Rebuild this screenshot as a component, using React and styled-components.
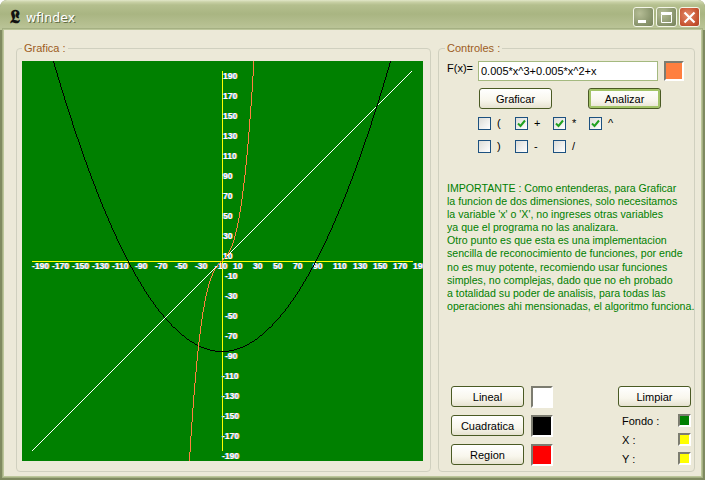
import React from 'react';
import styled, { createGlobalStyle } from 'styled-components';

const GlobalStyle = createGlobalStyle`
  html, body {
    margin: 0;
    padding: 0;
    background: #fff;
  }
  * { box-sizing: border-box; }
`;

const Window = styled.div`
  width: 705px;
  height: 480px;
  display: flex;
  flex-direction: column;
  font-family: "Liberation Sans", Arial, sans-serif;
  font-size: 11px;
  color: #000;
  background: #7f8a60;
  border-radius: 7px 7px 0 0;
  overflow: hidden;
`;

const TitleBar = styled.div`
  height: 30px;
  flex: none;
  display: flex;
  align-items: center;
  padding: 4px 5px 0 7px;
  background: linear-gradient(180deg, #e2e7c9 0px, #c9d1a6 2px, #b4bf8e 5px, #a9b582 14px, #b5bf90 24px, #bcc69a 30px);
`;

const AppIcon = styled.span`
  width: 15px;
  margin-right: 4px;
  font-family: "DejaVu Serif", "Liberation Serif", serif;
  font-size: 18px;
  font-weight: bold;
  color: #111;
  text-align: center;
  line-height: 16px;
`;

const TitleText = styled.span`
  flex: 1;
  font-family: "DejaVu Sans", Verdana, sans-serif;
  font-size: 12.5px;
  color: #fff;
  text-shadow: 1px 1px 0 #5f6b45;
`;

const CaptionButton = styled.button`
  width: 21px;
  height: 20px;
  padding: 0;
  margin-left: 2px;
  border: 1px solid #f4f6e8;
  border-radius: 3px;
  background: ${p => p.$close
    ? 'radial-gradient(circle at 40% 40%, #e58a6a, #c4512e 70%, #b04426)'
    : 'radial-gradient(circle at 30% 30%, #b5bd95, #8d9870 60%, #77825a)'};
  display: flex;
  align-items: center;
  justify-content: center;
`;

const Body = styled.div`
  flex: 1;
  margin: 0 4px 4px;
  padding: 12px 6px 4px 12px;
  background: #ece9d8;
  box-shadow: 0 0 0 1px #bcc69a, 0 0 0 2px #a5b083;
  display: flex;
  gap: 7px;
`;

const GroupBox = styled.fieldset`
  margin: 0;
  width: ${p => p.$width}px;
  border: 1px solid #d0d0bf;
  border-radius: 4px;
  min-width: 0;
`;

const GraphGroup = styled(GroupBox)`
  padding: 6px 0 0 5px;
`;

const ControlGroup = styled(GroupBox)`
  padding: 6px 3px 6px 8px;
  display: flex;
  flex-direction: column;
  justify-content: space-between;
`;

const GroupTitle = styled.legend`
  padding: 0 2px;
  margin-left: ${p => p.$indent}px;
  font-size: 11px;
  line-height: 13px;
  color: #9c5c1d;
`;

const Plot = styled.svg`
  display: block;
  width: 401px;
  height: 400px;
  background: #008000;
`;

const AxisLabel = styled.text`
  font-family: "Liberation Sans", Arial, sans-serif;
  font-size: 8.5px;
  font-weight: bold;
  fill: #fff;
  text-shadow: -0.6px 0 0 #3aa0ff, 0.6px 0 0 #ff9a40;
`;

const FormulaRow = styled.div`
  display: flex;
  align-items: flex-start;
`;

const FormulaLabel = styled.label`
  width: 31px;
  margin-top: 1px;
  line-height: 13px;
`;

const FormulaInput = styled.input`
  width: 180px;
  height: 20px;
  padding: 0 2px;
  border: 1px solid #a4b97f;
  background: #fff;
  font-family: "Liberation Sans", Arial, sans-serif;
  font-size: 11px;
  color: #000;
  outline: none;
`;

const Swatch = styled.span`
  display: block;
  flex: none;
  width: ${p => p.$size}px;
  height: ${p => p.$size}px;
  background: ${p => p.$color};
  border: 2px solid;
  border-color: #7c7c70 #fff #fff #7c7c70;
`;

const FormulaSwatch = styled(Swatch)`
  margin-left: 6px;
`;

const ActionRow = styled.div`
  display: flex;
  gap: 36px;
  margin: 7px 0 0 32px;
`;

const PushButton = styled.button`
  width: 73px;
  height: 21px;
  padding: 0;
  border: 1px solid #4a5a24;
  border-radius: 3px;
  background: linear-gradient(180deg, #fff 0%, #f8f6ec 60%, #e6e2d0 100%);
  box-shadow: ${p => p.$default ? 'inset 0 0 0 2px #a3c468' : 'none'};
  font-family: "Liberation Sans", Arial, sans-serif;
  font-size: 11px;
  color: #000;
`;

const CheckGrid = styled.div`
  display: grid;
  grid-template-columns: 37px 38px 36px 36px;
  row-gap: 9px;
  margin: 7px 0 0 31px;
`;

const CheckItem = styled.label`
  display: flex;
  align-items: center;
  gap: 6px;
  height: 14px;
  font-size: 11px;
`;

const CheckBox = styled.span`
  width: 13px;
  height: 13px;
  flex: none;
  border: 1px solid #1c5180;
  background: linear-gradient(135deg, #dcdcd7, #fff);
  display: flex;
  align-items: center;
  justify-content: center;
`;

const Notice = styled.p`
  margin: 29px 0 0;
  font-size: 10.6px;
  line-height: 13.1px;
  color: #008000;
  white-space: pre;
`;

const TopArea = styled.div``;

const BottomArea = styled.div`
  display: flex;
  justify-content: space-between;
  padding: 0 0 0 4px;
`;

const StyleColumn = styled.div`
  display: flex;
  flex-direction: column;
  gap: 8px;
`;

const StyleRow = styled.div`
  display: flex;
  align-items: center;
  gap: 7px;
  height: 21px;
`;

const ColorColumn = styled.div`
  width: 73px;
  display: flex;
  flex-direction: column;
`;

const ColorRow = styled.div`
  display: flex;
  align-items: flex-start;
  justify-content: space-between;
  height: 13px;
  margin-top: 6px;
  padding-left: 4px;
  line-height: 15px;
  &:first-of-type { margin-top: 7px; }
`;

const X_MID = 200;
const Y_MID = 200;

const toPoints = (fn, from, to) => {
  const pts = [];
  for (let x = from; x <= to; x += 1) {
    pts.push(`${X_MID + x},${Math.round(Y_MID - fn(x))}`);
  }
  return pts.join(' ');
};

const cubic = x => 0.005 * x ** 3 + 0.005 * x ** 2 + x;
const parabola = x => 0.0102 * x ** 2 - 90;

// the program only labels the odd tens of the scale
const ticks = [];
for (let v = -190; v <= 190; v += 20) ticks.push(v);

const labelOffset = text => {
  if (text.length === 4) return 0;
  return text[0] === '-' ? 3 : 1;
};

const Graph = () => (
  <Plot viewBox="0 0 401 400">
    <g shapeRendering="crispEdges">
      <rect x={X_MID} y={10} width="1" height="380" fill="#ffff00" />
      <rect x={10} y={Y_MID} width="381" height="1" fill="#ffff00" />
    </g>
    {ticks.map(v => (
      <AxisLabel key={`h${v}`} x={X_MID + v + labelOffset(String(v))} y={Y_MID + 8}>{v}</AxisLabel>
    ))}
    {ticks.map(v => (
      <AxisLabel key={`v${v}`} x={X_MID + labelOffset(String(v))} y={Y_MID - v + 8}>{v}</AxisLabel>
    ))}
    <g fill="none" strokeWidth="1" shapeRendering="crispEdges">
      <polyline points={toPoints(x => x, -190, 190)} stroke="#ffffff" />
      <polyline points={toPoints(parabola, -190, 190)} stroke="#000000" />
      <polyline points={toPoints(cubic, -34, 34)} stroke="#ff7f3f" />
    </g>
  </Plot>
);

const Check = ({ label, checked }) => (
  <CheckItem>
    <CheckBox>
      {checked && (
        <svg width="9" height="9" viewBox="0 0 9 9">
          <path d="M1 4.5 L3.5 7 L8 1.5" fill="none" stroke="#21a121" strokeWidth="2" />
        </svg>
      )}
    </CheckBox>
    {label}
  </CheckItem>
);

const notice = `IMPORTANTE : Como entenderas, para Graficar
la funcion de dos dimensiones, solo necesitamos
la variable 'x' o 'X', no ingreses otras variables
ya que el programa no las analizara.
Otro punto es que esta es una implementacion
sencilla de reconocimiento de funciones, por ende
no es muy potente, recomiendo usar funciones
simples, no complejas, dado que no eh probado
a totalidad su poder de analisis, para todas las
operaciones ahi mensionadas, el algoritmo funciona.`;

export default function App() {
  return (
    <Window>
      <GlobalStyle />
      <TitleBar>
        <AppIcon>𝕷</AppIcon>
        <TitleText>wfIndex</TitleText>
        <CaptionButton aria-label="minimizar">
          <svg width="13" height="13" viewBox="0 0 13 13"><rect x="1" y="9" width="8" height="3" fill="#fff" /></svg>
        </CaptionButton>
        <CaptionButton aria-label="maximizar">
          <svg width="13" height="13" viewBox="0 0 13 13"><path d="M1.5 3.5 H11.5 V11.5 H1.5 Z" fill="none" stroke="#fff" /><rect x="1" y="1" width="11" height="2" fill="#fff" /></svg>
        </CaptionButton>
        <CaptionButton aria-label="cerrar" $close>
          <svg width="13" height="13" viewBox="0 0 13 13"><path d="M1.5 1.5 L11.5 11.5 M11.5 1.5 L1.5 11.5" stroke="#fff" strokeWidth="2.2" /></svg>
        </CaptionButton>
      </TitleBar>
      <Body>
        <GraphGroup $width={415}>
          <GroupTitle $indent={0}>Grafica :</GroupTitle>
          <Graph />
        </GraphGroup>
        <ControlGroup $width={257}>
          <GroupTitle $indent={-2}>Controles :</GroupTitle>
          <TopArea>
            <FormulaRow>
              <FormulaLabel>F(x)=</FormulaLabel>
              <FormulaInput readOnly value="0.005*x^3+0.005*x^2+x" />
              <FormulaSwatch $size={20} $color="#ff7f3f" />
            </FormulaRow>
            <ActionRow>
              <PushButton>Graficar</PushButton>
              <PushButton $default>Analizar</PushButton>
            </ActionRow>
            <CheckGrid>
              <Check label="(" />
              <Check label="+" checked />
              <Check label="*" checked />
              <Check label="^" checked />
              <Check label=")" />
              <Check label="-" />
              <Check label="/" />
            </CheckGrid>
            <Notice>{notice}</Notice>
          </TopArea>
          <BottomArea>
            <StyleColumn>
              <StyleRow><PushButton>Lineal</PushButton><Swatch $size={22} $color="#ffffff" /></StyleRow>
              <StyleRow><PushButton>Cuadratica</PushButton><Swatch $size={22} $color="#000000" /></StyleRow>
              <StyleRow><PushButton>Region</PushButton><Swatch $size={22} $color="#ff0000" /></StyleRow>
            </StyleColumn>
            <ColorColumn>
              <PushButton>Limpiar</PushButton>
              <ColorRow>Fondo :<Swatch $size={13} $color="#008000" /></ColorRow>
              <ColorRow>X :<Swatch $size={13} $color="#ffff00" /></ColorRow>
              <ColorRow>Y :<Swatch $size={13} $color="#ffff00" /></ColorRow>
            </ColorColumn>
          </BottomArea>
        </ControlGroup>
      </Body>
    </Window>
  );
}
